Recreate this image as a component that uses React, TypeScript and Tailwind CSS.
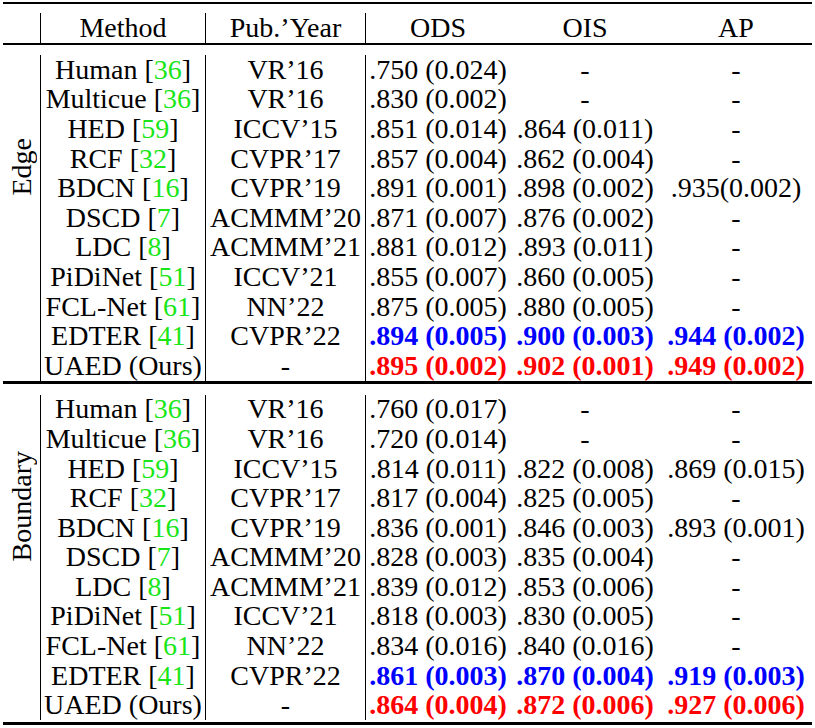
import React from "react"

type Row = {
  method: string
  cite?: string
  pub: string
  ods: string
  ois: string
  ap: string
  mark?: "best" | "second"
}

const edgeRows: Row[] = [
  { method: "Human", cite: "36", pub: "VR’16", ods: ".750 (0.024)", ois: "-", ap: "-" },
  { method: "Multicue", cite: "36", pub: "VR’16", ods: ".830 (0.002)", ois: "-", ap: "-" },
  { method: "HED", cite: "59", pub: "ICCV’15", ods: ".851 (0.014)", ois: ".864 (0.011)", ap: "-" },
  { method: "RCF", cite: "32", pub: "CVPR’17", ods: ".857 (0.004)", ois: ".862 (0.004)", ap: "-" },
  { method: "BDCN", cite: "16", pub: "CVPR’19", ods: ".891 (0.001)", ois: ".898 (0.002)", ap: ".935(0.002)" },
  { method: "DSCD", cite: "7", pub: "ACMMM’20", ods: ".871 (0.007)", ois: ".876 (0.002)", ap: "-" },
  { method: "LDC", cite: "8", pub: "ACMMM’21", ods: ".881 (0.012)", ois: ".893 (0.011)", ap: "-" },
  { method: "PiDiNet", cite: "51", pub: "ICCV’21", ods: ".855 (0.007)", ois: ".860 (0.005)", ap: "-" },
  { method: "FCL-Net", cite: "61", pub: "NN’22", ods: ".875 (0.005)", ois: ".880 (0.005)", ap: "-" },
  { method: "EDTER", cite: "41", pub: "CVPR’22", ods: ".894 (0.005)", ois: ".900 (0.003)", ap: ".944 (0.002)", mark: "second" },
  { method: "UAED (Ours)", pub: "-", ods: ".895 (0.002)", ois: ".902 (0.001)", ap: ".949 (0.002)", mark: "best" },
]

const boundaryRows: Row[] = [
  { method: "Human", cite: "36", pub: "VR’16", ods: ".760 (0.017)", ois: "-", ap: "-" },
  { method: "Multicue", cite: "36", pub: "VR’16", ods: ".720 (0.014)", ois: "-", ap: "-" },
  { method: "HED", cite: "59", pub: "ICCV’15", ods: ".814 (0.011)", ois: ".822 (0.008)", ap: ".869 (0.015)" },
  { method: "RCF", cite: "32", pub: "CVPR’17", ods: ".817 (0.004)", ois: ".825 (0.005)", ap: "-" },
  { method: "BDCN", cite: "16", pub: "CVPR’19", ods: ".836 (0.001)", ois: ".846 (0.003)", ap: ".893 (0.001)" },
  { method: "DSCD", cite: "7", pub: "ACMMM’20", ods: ".828 (0.003)", ois: ".835 (0.004)", ap: "-" },
  { method: "LDC", cite: "8", pub: "ACMMM’21", ods: ".839 (0.012)", ois: ".853 (0.006)", ap: "-" },
  { method: "PiDiNet", cite: "51", pub: "ICCV’21", ods: ".818 (0.003)", ois: ".830 (0.005)", ap: "-" },
  { method: "FCL-Net", cite: "61", pub: "NN’22", ods: ".834 (0.016)", ois: ".840 (0.016)", ap: "-" },
  { method: "EDTER", cite: "41", pub: "CVPR’22", ods: ".861 (0.003)", ois: ".870 (0.004)", ap: ".919 (0.003)", mark: "second" },
  { method: "UAED (Ours)", pub: "-", ods: ".864 (0.004)", ois: ".872 (0.006)", ap: ".927 (0.006)", mark: "best" },
]

function ScoreRow({ row }: { row: Row }) {
  // best result in red, second best in blue, both bold
  const score =
    row.mark === "best"
      ? "font-bold text-[#ff0000]"
      : row.mark === "second"
        ? "font-bold text-[#0000ff]"
        : ""

  return (
    <div className="flex h-[29.6px] leading-none">
      <div className="w-[165px] border-l border-black flex items-center justify-center whitespace-pre">
        {row.method}
        {row.cite && (
          <>
            {" ["}
            <span className="text-[#19e619]">{row.cite}</span>]
          </>
        )}
      </div>
      <div className="w-[160px] border-l border-black flex items-center justify-center">
        {row.pub}
      </div>
      <div className={`w-[145px] border-l border-black flex items-center justify-center whitespace-pre ${score}`}>
        {row.ods}
      </div>
      <div className={`w-[150px] flex items-center justify-center whitespace-pre ${score}`}>
        {row.ois}
      </div>
      <div className={`w-[152px] flex items-center justify-center whitespace-pre ${score}`}>
        {row.ap}
      </div>
    </div>
  )
}

function Group({ label, rows }: { label: string; rows: Row[] }) {
  return (
    <div className="flex">
      <div className="w-[37px] flex items-center justify-center pb-[102px] leading-none">
        <span className="[writing-mode:vertical-rl] rotate-180">{label}</span>
      </div>
      <div className="flex flex-col">
        {rows.map((row, i) => (
          <ScoreRow key={i} row={row} />
        ))}
      </div>
    </div>
  )
}

export default function App() {
  return (
    <div className="bg-white w-[815px] h-[728px] pl-[3px] pt-[2px] [font-family:'Liberation_Serif',serif] text-[28px] text-black">
      <div className="w-[809px] flex flex-col">
        {/* Top rule */}
        <div className="h-[2px] bg-black" />
        <div className="h-[9px]" />

        {/* Header */}
        <div className="flex h-[30px] leading-none">
          <div className="w-[37px]" />
          <div className="w-[165px] border-l border-black flex items-center justify-center">Method</div>
          <div className="w-[160px] border-l border-black flex items-center justify-center">Pub.’Year</div>
          <div className="w-[145px] border-l border-black flex items-center justify-center">ODS</div>
          <div className="w-[150px] flex items-center justify-center">OIS</div>
          <div className="w-[152px] flex items-center justify-center">AP</div>
        </div>
        <div className="h-[2px] bg-black" />
        <div className="h-[10px]" />

        <Group label="Edge" rows={edgeRows} />

        <div className="h-[3px] bg-black" />
        <div className="h-[11px]" />

        <Group label="Boundary" rows={boundaryRows} />

        <div className="h-[1.5px]" />
        <div className="h-[3px] bg-black" />
      </div>
    </div>
  )
}
